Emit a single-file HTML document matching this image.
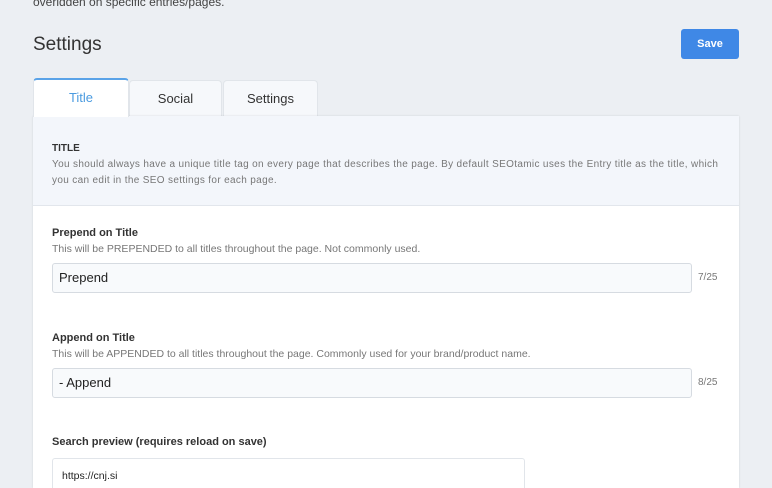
<!DOCTYPE html>
<html><head><style>
*{margin:0;padding:0;box-sizing:border-box}
html,body{width:772px;height:488px;overflow:hidden}
body{background:#eceff3;font-family:"Liberation Sans",sans-serif;position:relative;color:#333}
.a{position:absolute}
.card{position:absolute;left:33px;top:116px;width:706px;height:372px;background:#fff;box-shadow:0 0 2px rgba(0,0,0,.12)}
.head{position:absolute;left:0;top:0;width:706px;height:90px;background:#f3f6fb;border-bottom:1px solid #e2e6ec}
.tab{position:absolute;top:80px;height:36px;background:#f6f8fb;border:1px solid #e1e5ea;border-bottom:none;border-radius:4px 4px 0 0;font-size:13px;text-align:center;line-height:35px;color:#333}
.lbl{font-size:11px;font-weight:bold;color:#333}
.desc{font-size:10.5px;color:#777}
.inp{position:absolute;left:52px;width:640px;height:30px;background:#f8fafc;border:1px solid #d6dbe1;border-radius:3px;font-size:13px;padding-left:6px;line-height:28px;color:#222}
.cnt{font-size:10px;color:#777}
</style></head><body>
<div class="a" style="left:33px;top:-5px;font-size:12px;color:#444">overidden on specific entries/pages.</div>
<div class="a" style="left:33px;top:34px;font-size:19px;color:#333">Settings</div>
<div class="a" style="left:681px;top:29px;width:58px;height:30px;background:#3f88e6;border-radius:3px;color:#fff;font-size:11px;font-weight:bold;text-align:center;line-height:30px">Save</div>
<div class="tab" style="left:223px;width:95px">Settings</div>
<div class="tab" style="left:129px;width:93px">Social</div>
<div class="card">
<div class="head">
<div class="a lbl" style="left:19px;top:27px;font-size:10px">TITLE</div>
<div class="a desc" style="left:19px;top:41px;line-height:16px;width:680px;font-size:10px;letter-spacing:0.34px">You should always have a unique title tag on every page that describes the page. By default SEOtamic uses the Entry title as the title, which you can edit in the SEO settings for each page.</div>
</div>
</div>
<div class="tab" style="left:33px;top:78px;width:96px;height:39px;background:#fff;border-top:2px solid #5aa3e8;color:#4b9be0;line-height:36px">Title</div>
<div class="a lbl" style="left:52px;top:227px">Prepend on Title</div>
<div class="a desc" style="left:52px;top:243px">This will be PREPENDED to all titles throughout the page. Not commonly used.</div>
<div class="inp" style="top:263px">Prepend</div>
<div class="a cnt" style="left:698px;top:272px">7/25</div>
<div class="a lbl" style="left:52px;top:332px">Append on Title</div>
<div class="a desc" style="left:52px;top:348px">This will be APPENDED to all titles throughout the page. Commonly used for your brand/product name.</div>
<div class="inp" style="top:368px">- Append</div>
<div class="a cnt" style="left:698px;top:377px">8/25</div>
<div class="a lbl" style="left:52px;top:436px">Search preview (requires reload on save)</div>
<div class="a" style="left:52px;top:458px;width:473px;height:30px;background:#fff;border:1px solid #e1e5ea;border-bottom:none;border-radius:3px 3px 0 0;font-size:10.5px;padding:11px 0 0 9px;color:#222">https://cnj.si</div>
</body></html>
